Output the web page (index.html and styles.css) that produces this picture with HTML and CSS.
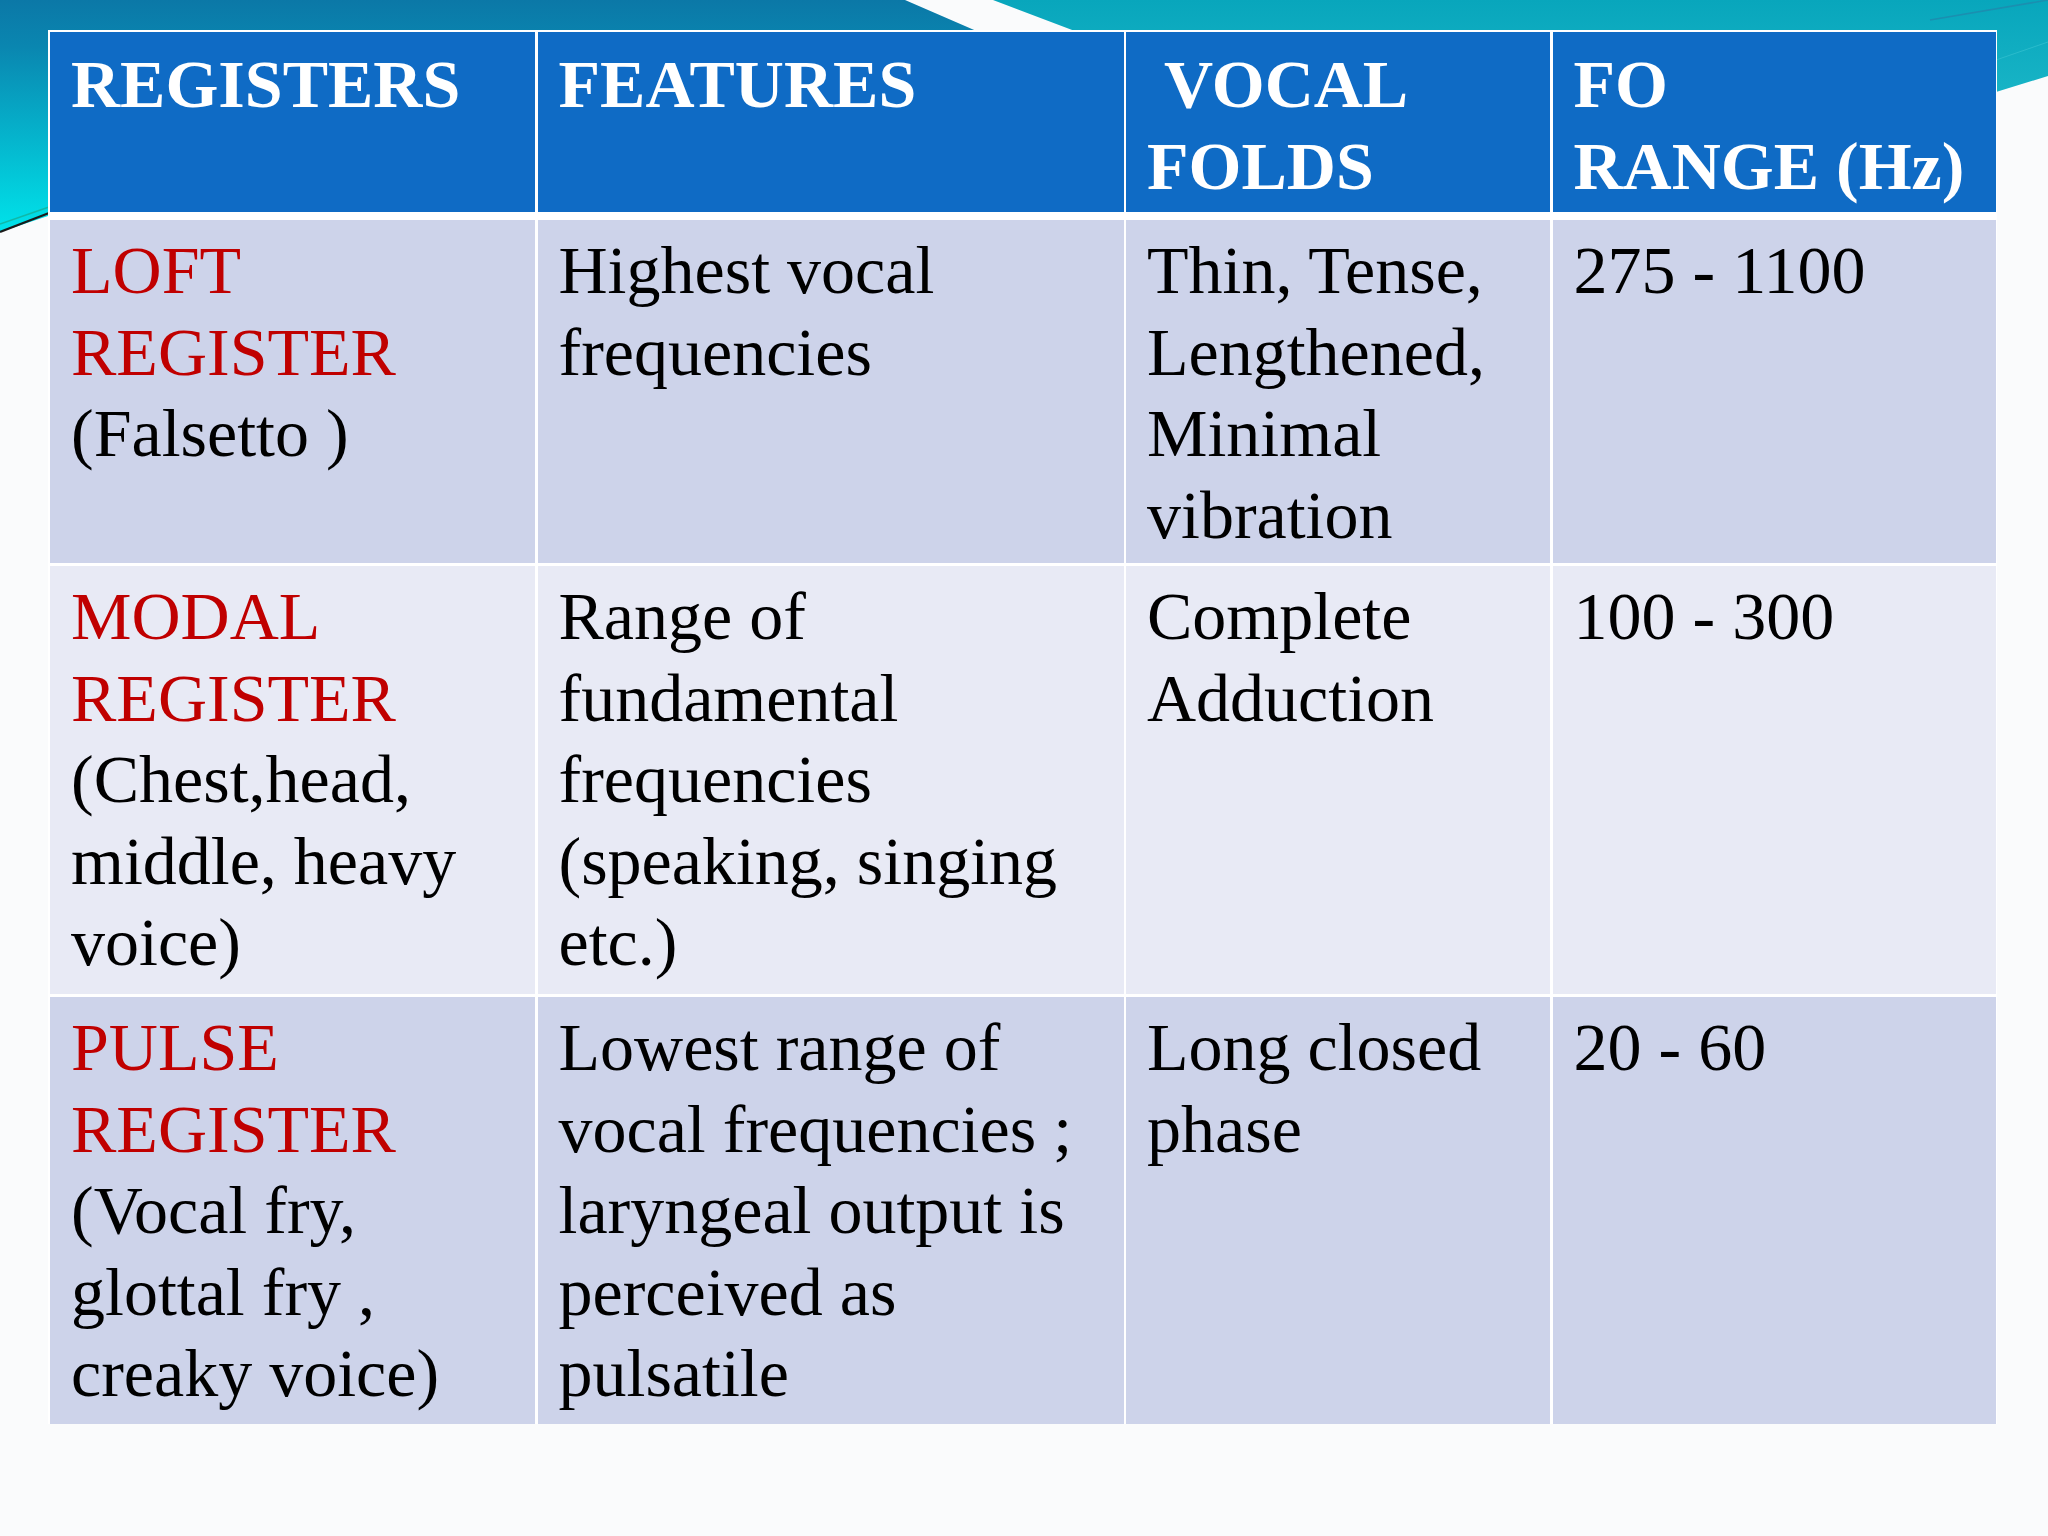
FILE: index.html
```html
<!DOCTYPE html>
<html lang="en">
<head>
<meta charset="utf-8">
<title>Registers</title>
<link rel="stylesheet" href="styles.css">
</head>
<body>
<div class="slide">
  <svg class="backdrop" width="2048" height="1536" viewBox="0 0 2048 1536" aria-hidden="true">
    <defs>
      <linearGradient id="leftGrad" x1="0" y1="0" x2="0" y2="232" gradientUnits="userSpaceOnUse">
        <stop offset="0" stop-color="#0b78a7"/>
        <stop offset="0.2" stop-color="#0a86b0"/>
        <stop offset="1" stop-color="#00e3ea"/>
      </linearGradient>
      <linearGradient id="rightGrad" x1="0" y1="0" x2="0" y2="95" gradientUnits="userSpaceOnUse">
        <stop offset="0" stop-color="#08a6bc"/>
        <stop offset="1" stop-color="#18b4c6"/>
      </linearGradient>
    </defs>
    <path d="M0,0 L905,0 L988,36 L60,36 L60,212 L0,232 Z" fill="url(#leftGrad)"/>
    <path d="M993,0 L2048,0 L2048,76 L1996,92 L1996,36 L1088,36 Z" fill="url(#rightGrad)"/>
    <path d="M1930,20 L2048,0" stroke="#1b8fb0" stroke-width="1.5" fill="none"/>
    <path d="M1996,60 L2048,42" stroke="#2bbbcc" stroke-width="1" fill="none"/>
    <path d="M0,230 L49,213" stroke="#10b8a8" stroke-width="1.5" fill="none" transform="translate(0,-6)"/>
    <path d="M0,232 L49,213" stroke="#1a1a1a" stroke-width="2.2" fill="none"/>
  </svg>

  <div class="table">
    <div class="cell head c1">REGISTERS</div>
    <div class="cell head c2">FEATURES</div>
    <div class="cell head c3">&nbsp;VOCAL<br>FOLDS</div>
    <div class="cell head c4">FO<br>RANGE (Hz)</div>

    <div class="cell odd"><span class="reg">LOFT<br>REGISTER</span><br>(Falsetto )</div>
    <div class="cell odd">Highest vocal<br>frequencies</div>
    <div class="cell odd">Thin, Tense,<br>Lengthened,<br>Minimal<br>vibration</div>
    <div class="cell odd">275 - 1100</div>

    <div class="cell even"><span class="reg">MODAL<br>REGISTER</span><br>(Chest,head,<br>middle, heavy<br>voice)</div>
    <div class="cell even">Range of<br>fundamental<br>frequencies<br>(speaking, singing<br>etc.)</div>
    <div class="cell even">Complete<br>Adduction</div>
    <div class="cell even">100 - 300</div>

    <div class="cell odd"><span class="reg">PULSE<br>REGISTER</span><br>(Vocal fry,<br>glottal fry ,<br>creaky voice)</div>
    <div class="cell odd">Lowest range of<br>vocal frequencies ;<br>laryngeal output is<br>perceived as<br>pulsatile</div>
    <div class="cell odd">Long closed<br>phase</div>
    <div class="cell odd">20 - 60</div>
  </div>
</div>
</body>
</html>
```

FILE: styles.css
```css
html, body {
  margin: 0;
  padding: 0;
}

body {
  background: #fafbfc;
  font-family: "Liberation Serif", "Times New Roman", serif;
}

.slide {
  position: relative;
  width: 2048px;
  height: 1536px;
  overflow: hidden;
  background: #fafbfc;
}

.backdrop {
  position: absolute;
  top: 0;
  left: 0;
  z-index: 0;
}

.table {
  position: relative;
  z-index: 1;
  margin: 30px 0 0 48px;
  width: fit-content;
  display: grid;
  grid-template-columns: 485px 586px 424px 443px;
  grid-template-rows: 185px 343px 428px 427px;
  gap: 3px 2.5px;
  padding: 2px 1px 0 2px;
  background: #ffffff;
}

.cell {
  box-sizing: border-box;
  padding: 10px 14px 10px 21px;
  font-size: 68px;
  line-height: 81.5px;
  color: #000000;
  white-space: nowrap;
}

.head {
  background: #0f6bc5;
  color: #ffffff;
  font-weight: bold;
  padding-top: 12px;
  border-bottom: 5px solid #ffffff;
  background-clip: padding-box;
}

.odd {
  background: #cdd3ea;
}

.even {
  background: #e8eaf5;
}

.reg {
  color: #c00000;
}
```
